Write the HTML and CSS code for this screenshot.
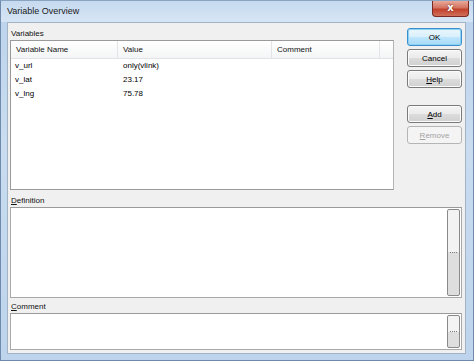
FILE: index.html
```html
<!DOCTYPE html>
<html lang="en">
<head>
  <meta charset="UTF-8">
  <title>Variable Overview</title>
  <link rel="stylesheet" href="styles.css">
</head>
<body>
  <div class="window">
    <div class="titlebar">
      <span class="title">Variable Overview</span>
      <div class="close">x</div>
    </div>

    <div class="frame">
      <div class="client">
        <div class="top">
          <div class="vars">
            <div class="label">Variables</div>
            <div class="listview">
              <div class="header">
                <div class="col">Variable Name</div>
                <div class="col">Value</div>
                <div class="col">Comment</div>
                <div class="col filler"></div>
              </div>
              <div class="row">
                <div class="cell">v_url</div>
                <div class="cell">only(vlink)</div>
                <div class="cell"></div>
              </div>
              <div class="row">
                <div class="cell">v_lat</div>
                <div class="cell">23.17</div>
                <div class="cell"></div>
              </div>
              <div class="row">
                <div class="cell">v_lng</div>
                <div class="cell">75.78</div>
                <div class="cell"></div>
              </div>
            </div>
          </div>

          <div class="buttons">
            <button class="btn default">OK</button>
            <button class="btn">Cancel</button>
            <button class="btn"><u>H</u>elp</button>
            <button class="btn spaced"><u>A</u>dd</button>
            <button class="btn" disabled><u>R</u>emove</button>
          </div>
        </div>

        <div class="label def-label"><u>D</u>efinition</div>
        <div class="textbox definition">
          <div class="thumb"><span class="grip"></span></div>
        </div>

        <div class="label comment-label"><u>C</u>omment</div>
        <div class="textbox comment">
          <div class="thumb"><span class="grip"></span></div>
        </div>
      </div>
    </div>
  </div>
</body>
</html>
```

FILE: styles.css
```css
* {
  margin: 0;
  padding: 0;
  box-sizing: border-box;
}

body {
  font-family: "Liberation Sans", Arial, sans-serif;
  font-size: 8px;
  color: #000;
  background: #c8dbef;
}

.window {
  width: 474px;
  height: 361px;
  display: flex;
  flex-direction: column;
  background: linear-gradient(to bottom, #bcd3ec, #c9dcf0 40%, #bdd4ec);
  border: 1px solid #6f8aab;
  border-top-color: #8aa3c0;
}

.titlebar {
  height: 21px;
  display: flex;
  align-items: flex-start;
  padding-left: 6px;
  padding-right: 4px;
  background: linear-gradient(to bottom, #c6daef, #d6e5f5);
}

.title {
  margin-top: 5px;
  font-size: 9px;
  color: #1a1a1a;
}

.close {
  margin-left: auto;
  width: 37px;
  height: 16px;
  border: 1px solid #7a2a20;
  border-top: none;
  border-radius: 0 0 4px 4px;
  background: linear-gradient(to bottom, #e9a99a, #d47361 45%, #c2412c 55%, #d0705a);
  color: #fff;
  font-family: "DejaVu Sans", sans-serif;
  font-weight: bold;
  font-size: 10px;
  line-height: 14px;
  text-align: center;
  text-shadow: 0 0 2px #5a1a10;
}

.frame {
  flex: 1;
  padding: 0 7px 6px 6px;
  display: flex;
}

.client {
  flex: 1;
  background: #f0f0f0;
  border: 1px solid #a3b3c6;
  padding: 4px 3px 0 2px;
  display: flex;
  flex-direction: column;
}

.label {
  height: 13px;
  line-height: 13px;
  padding-left: 1px;
  color: #111;
}

.top {
  display: flex;
  align-items: flex-start;
}

.vars {
  width: 384px;
}

.listview {
  height: 150px;
  background: #fff;
  border: 1px solid #9a9a9a;
  border-right-color: #b5b5b5;
}

.header {
  display: grid;
  grid-template-columns: 107px 154px 108px 1fr;
  height: 18px;
  background: linear-gradient(to bottom, #ffffff, #f4f5f6);
  border-bottom: 1px solid #e2e3e5;
}

.col {
  line-height: 17px;
  padding-left: 5px;
  border-right: 1px solid #e3e4e6;
  color: #111;
}

.col.filler {
  border-right: none;
}

.row {
  display: grid;
  grid-template-columns: 107px 154px 108px;
  height: 14px;
  line-height: 14px;
}

.cell {
  padding-left: 5px;
}

.row .cell:first-child {
  padding-left: 4px;
}

.buttons {
  margin-left: auto;
  margin-top: 1px;
  width: 55px;
  display: flex;
  flex-direction: column;
  gap: 3px;
}

.btn {
  height: 18px;
  font-family: "Liberation Sans", Arial, sans-serif;
  font-size: 8px;
  color: #000;
  border: 1px solid #7a7a7a;
  border-radius: 3px;
  background: linear-gradient(to bottom, #f4f4f4, #ebebeb 48%, #dcdcdc 52%, #d0d0d0);
  box-shadow: inset 0 0 0 1px #fbfbfb;
}

.btn.default {
  border-color: #3a90cc;
  background: linear-gradient(to bottom, #eaf6fd, #d9f0fc 48%, #bee6fd 52%, #a7d9f5);
  box-shadow: inset 0 0 0 1px #8fd0f5;
}

.btn.spaced {
  margin-top: 14px;
}

.btn:disabled {
  color: #a3a3a3;
  border-color: #b5b5b5;
  background: #f4f4f4;
  box-shadow: none;
}

.textbox {
  background: #fff;
  border: 1px solid #a8a8a8;
  border-top-color: #9a9a9a;
  display: flex;
  justify-content: flex-end;
  padding: 1px;
}

.def-label {
  margin-top: 4px;
}

.definition {
  height: 91px;
}

.comment-label {
  margin-top: 2px;
}

.comment {
  height: 37px;
}

.thumb {
  width: 13px;
  border: 1px solid #8a8a8a;
  border-radius: 2px;
  background: linear-gradient(to bottom, #f3f3f3 50%, #dedede 50%);
  display: flex;
  align-items: center;
  justify-content: center;
}

.grip {
  width: 7px;
  height: 1px;
  border-top: 1px dotted #7a7a7a;
}
```
